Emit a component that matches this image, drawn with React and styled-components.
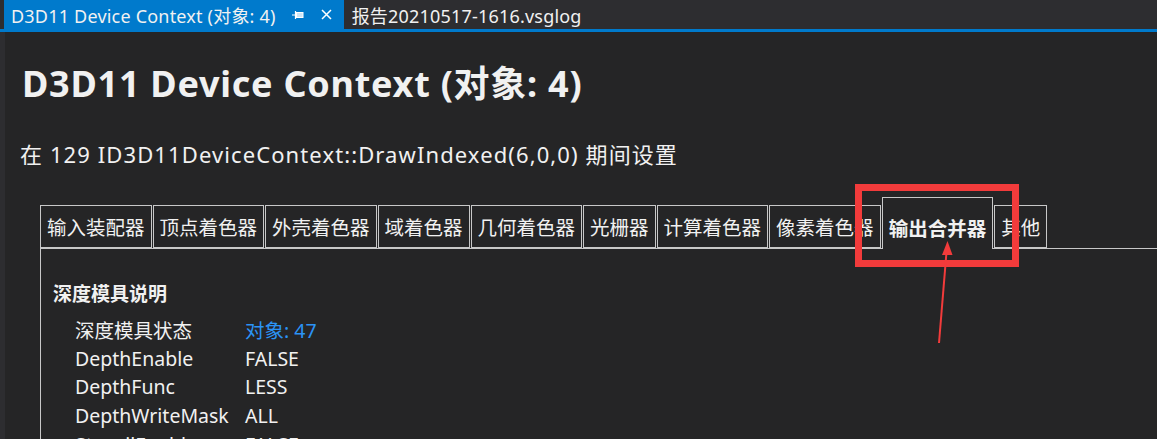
import React from "react"
import styled, { createGlobalStyle } from "styled-components"

const GlobalStyle = createGlobalStyle`
  html, body {
    margin: 0;
    padding: 0;
    background: #2d2d30;
    overflow: hidden;
  }
  body {
    font-family: "Noto Sans", "Noto Sans CJK SC", sans-serif;
    color: #f1f1f1;
  }
`

const stages = [
  "输入装配器",
  "顶点着色器",
  "外壳着色器",
  "域着色器",
  "几何着色器",
  "光栅器",
  "计算着色器",
  "像素着色器",
  "输出合并器",
  "其他",
]

const depthRows = [
  ["深度模具状态", "对象: 47", true],
  ["DepthEnable", "FALSE"],
  ["DepthFunc", "LESS"],
  ["DepthWriteMask", "ALL"],
  ["StencilEnable", "FALSE"],
]

const App = () => {
  return (
    <>
      <GlobalStyle />
      <Window>
        <DocTabStrip>
          <DocTab $active>
            <DocTabLabel>D3D11 Device Context (对象: 4)</DocTabLabel>
            <TabIcon width="12" height="10" viewBox="0 0 12 10" $gap={16}>
              <path d="M0 5h3M3.5 1v8" stroke="#fff" strokeWidth="1.2" fill="none" />
              <rect x="4.5" y="2.5" width="6.5" height="5" fill="#cfe6f7" stroke="#fff" strokeWidth="1" />
            </TabIcon>
            <TabIcon width="11" height="11" viewBox="0 0 11 11" $gap={17}>
              <path d="M1 1l9 9M10 1l-9 9" stroke="#fff" strokeWidth="1.5" fill="none" />
            </TabIcon>
          </DocTab>
          <DocTab>
            <DocTabLabel>报告20210517-1616.vsglog</DocTabLabel>
          </DocTab>
        </DocTabStrip>

        <Content>
          <Title>D3D11 Device Context (对象: 4)</Title>
          <Subtitle>在 129 ID3D11DeviceContext::DrawIndexed(6,0,0) 期间设置</Subtitle>

          <StageTabs>
            {stages.map((s) => (
              <StageTab key={s} $active={s === "输出合并器"}>
                {s}
              </StageTab>
            ))}
          </StageTabs>

          <Panel>
            <SectionHeader>深度模具说明</SectionHeader>
            <PropGrid>
              {depthRows.map(([k, v, link]) => (
                <React.Fragment key={k}>
                  <PropName>{k}</PropName>
                  <PropValue $link={link}>{v}</PropValue>
                </React.Fragment>
              ))}
            </PropGrid>
          </Panel>
        </Content>

        <Highlight />
        <Arrow width="1157" height="439" viewBox="0 0 1157 439">
          <line x1="939" y1="343" x2="946.5" y2="252" stroke="#f23b3b" strokeWidth="2" />
          <polygon points="947.5,241 942,255 952.5,255" fill="#f23b3b" />
        </Arrow>
      </Window>
    </>
  )
}

export default App

const Window = styled.div`
  position: relative;
  display: flex;
  flex-direction: column;
  height: 100vh;
  overflow: hidden;
`

const DocTabStrip = styled.div`
  display: flex;
  align-items: flex-end;
  height: 32px;
  padding-left: 4px;
  border-bottom: 3px solid #007acc;
  background: #2d2d30;
`

const DocTab = styled.div`
  display: flex;
  align-items: center;
  height: 29px;
  padding: 0 ${(p) => (p.$active ? "12px" : "8px")} 0 7px;
  margin-right: ${(p) => (p.$active ? "1px" : "0")};
  background: ${(p) => (p.$active ? "#007acc" : "transparent")};
  color: #f1f1f1;
`

const DocTabLabel = styled.span`
  font-size: 18px;
  letter-spacing: 0.2px;
  white-space: nowrap;
`

const TabIcon = styled.svg`
  display: block;
  margin-left: ${(p) => p.$gap}px;
`

const Content = styled.div`
  flex: 1;
  margin-left: 5px;
  background: #252526;
  padding-left: 17px;
`

const Title = styled.h1`
  margin: 30px 0 0 0;
  font-size: 36px;
  font-weight: 700;
  letter-spacing: 0.75px;
  line-height: 44px;
  white-space: nowrap;
`

const Subtitle = styled.div`
  margin: 33px 0 0 -2px;
  font-size: 22px;
  letter-spacing: 1.1px;
  line-height: 30px;
  white-space: nowrap;
`

const StageTabs = styled.div`
  display: flex;
  align-items: flex-end;
  gap: 1px;
  margin: 28px 0 0 18px;
  border-bottom: 1px solid #c8c8c8;
`

const StageTab = styled.div`
  box-sizing: border-box;
  height: ${(p) => (p.$active ? "52px" : "43px")};
  margin-bottom: ${(p) => (p.$active ? "-1px" : "0")};
  padding: ${(p) => (p.$active ? "8px" : "0")} 6px 0;
  display: flex;
  align-items: center;
  border: 1px solid #c8c8c8;
  border-bottom: ${(p) => (p.$active ? "none" : "1px solid #c8c8c8")};
  background: #252526;
  font-family: "Noto Sans CJK SC", sans-serif;
  font-size: 19.5px;
  font-weight: ${(p) => (p.$active ? 700 : 400)};
  color: #f1f1f1;
  white-space: nowrap;
`

const Panel = styled.div`
  margin-left: 18px;
  border-left: 1px solid #c8c8c8;
  padding: 32px 0 0 12px;
`

const SectionHeader = styled.div`
  font-family: "Noto Sans CJK SC", sans-serif;
  font-size: 19px;
  font-weight: 700;
  line-height: 24px;
`

const PropGrid = styled.div`
  display: grid;
  grid-template-columns: 170px auto;
  grid-auto-rows: 28.7px;
  margin: 10px 0 0 22px;
  align-items: center;
`

const PropName = styled.div`
  font-size: 19.5px;
  white-space: nowrap;
`

const PropValue = styled.div`
  font-size: 19.5px;
  color: ${(p) => (p.$link ? "#2b93f5" : "#f1f1f1")};
  white-space: nowrap;
`

const Highlight = styled.div`
  position: absolute;
  left: 855px;
  top: 184px;
  width: 164px;
  height: 83px;
  box-sizing: border-box;
  border: 7px solid #f23b3b;
  pointer-events: none;
`

const Arrow = styled.svg`
  position: absolute;
  left: 0;
  top: 0;
  pointer-events: none;
`
